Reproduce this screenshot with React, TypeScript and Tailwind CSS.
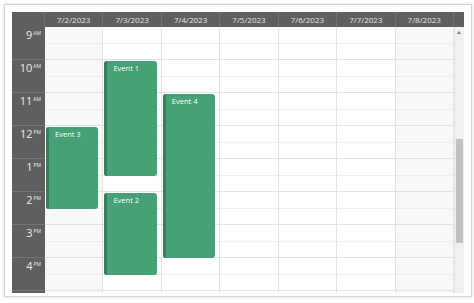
import React from "react";

const days = ["7/2/2023", "7/3/2023", "7/4/2023", "7/5/2023", "7/6/2023", "7/7/2023", "7/8/2023"];
const hours = [
  ["9", "AM"],
  ["10", "AM"],
  ["11", "AM"],
  ["12", "PM"],
  ["1", "PM"],
  ["2", "PM"],
  ["3", "PM"],
  ["4", "PM"],
];
const HOUR = 33;

type Ev = { day: number; start: number; end: number; text: string };
const events: Ev[] = [
  { day: 1, start: 1, end: 4.5, text: "Event 1" },
  { day: 1, start: 5, end: 7.5, text: "Event 2" },
  { day: 0, start: 3, end: 5.5, text: "Event 3" },
  { day: 2, start: 2, end: 7, text: "Event 4" },
];

export default function App() {
  const font = { fontFamily: '"Open Sans", "Noto Sans", sans-serif' };
  return (
    <div className="w-[474px] h-[303px] bg-white pt-[4px] pl-[4px]" style={font}>
      <div className="w-[468px] h-[293px] border border-[#d4d4d4] shadow-[0_0_3px_rgba(0,0,0,0.18)] bg-white p-[7px]">
        <div className="w-[452px] h-[281px] flex flex-col overflow-hidden">
          {/* header */}
          <div className="flex h-[15px] bg-[#5f5f5f] text-[#e6e6e6] text-[8px] leading-[15px] shrink-0">
            <div className="w-[33px] shrink-0 border-r border-[#707070]" />
            {days.map((d) => (
              <div key={d} className="w-[58.43px] shrink-0 text-center border-r border-[#707070]">
                {d}
              </div>
            ))}
            <div className="flex-1" />
          </div>
          {/* body */}
          <div className="flex flex-1 overflow-hidden">
            <div className="w-[33px] shrink-0 bg-[#5f5f5f] flex flex-col">
              {hours.map(([h, ap]) => (
                <div
                  key={h}
                  className="h-[33px] shrink-0 border-b border-[#747474] flex justify-end items-start pr-[4px] pt-[1px] text-[#ededed]"
                >
                  <span className="text-[11px] leading-[14px]">{h}</span>
                  <span className="text-[5px] leading-[8px] ml-[1px] mt-[1px]">{ap}</span>
                </div>
              ))}
            </div>
            {days.map((d, i) => {
              const weekend = i === 0 || i === 6;
              return (
                <div
                  key={d}
                  className={`relative w-[58.43px] shrink-0 border-r border-[#e3e3e3] flex flex-col ${
                    weekend ? "bg-[#f8f8f8]" : "bg-white"
                  }`}
                >
                  {Array.from({ length: 18 }).map((_, k) => (
                    <div
                      key={k}
                      className={`h-[16.5px] shrink-0 border-b ${
                        k % 2 === 1 ? "border-[#e2e2e2]" : "border-[#eeeeee]"
                      }`}
                    />
                  ))}
                  {events
                    .filter((e) => e.day === i)
                    .map((e) => (
                      <div
                        key={e.text}
                        className="absolute left-[1px] right-[4px] rounded-[3px] bg-[#46a176] overflow-hidden flex"
                        style={{ top: e.start * HOUR + 1, height: (e.end - e.start) * HOUR - 1 }}
                      >
                        <div className="w-[3px] bg-[#367f5c] shrink-0" />
                        <div className="pl-[6px] pt-[2px] text-white text-[7.5px] leading-[10px]">{e.text}</div>
                      </div>
                    ))}
                </div>
              );
            })}
            {/* scrollbar */}
            <div className="w-[10px] shrink-0 bg-[#f0f0f0] border-l border-[#e6e6e6] flex flex-col items-center">
              <div className="mt-[4px] w-0 h-0 border-l-[2px] border-r-[2px] border-b-[3px] border-l-transparent border-r-transparent border-b-[#7a7a7a]" />
              <div className="mt-[105px] w-[7px] h-[104px] bg-[#c1c1c1]" />
            </div>
          </div>
        </div>
      </div>
    </div>
  );
}
